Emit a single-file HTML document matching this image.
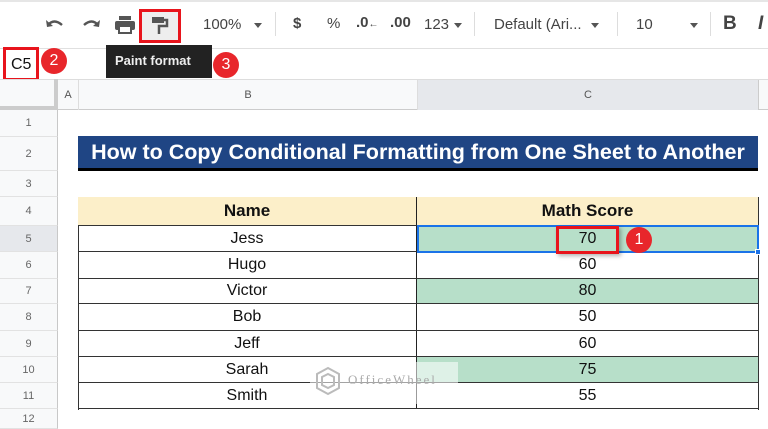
<!DOCTYPE html>
<html><head><meta charset="utf-8"><style>
*{margin:0;padding:0;box-sizing:border-box}
body{width:768px;height:420px;overflow:hidden;background:#fff;font-family:"Liberation Sans",Arial,sans-serif;position:relative}
.a{position:absolute}
.tb{color:#444;font-size:15px}
.sep{position:absolute;top:12px;width:1px;height:24px;background:#ddd}
.rh{position:absolute;left:0;width:58px;text-align:center;font-size:11px;color:#666;background:#f8f9fa;border-bottom:1px solid #e2e2e2;border-right:1px solid #c8c8c8}
.row{position:absolute;left:78px;width:680px;display:flex;border-bottom:1.5px solid #333;font-size:16px;color:#111}
.row div{display:flex;align-items:center;justify-content:center}
.row .b{width:339px;border-right:1.5px solid #222}
.row .c{flex:1}
.g{background:#b7dfc9}
.circ{position:absolute;width:26px;height:26px;border-radius:50%;background:#e8262b;color:#fff;font-size:16px;text-align:center;line-height:26px}
</style></head><body>
<div class="a" style="left:0;top:0;width:768px;height:2px;background:#e6e6e6"></div>
<svg class="a" style="left:44px;top:14px" width="22" height="20" viewBox="0 0 22 20"><path d="M4 11 Q10 4 18 11" stroke="#555" stroke-width="2.4" fill="none"/><path d="M2 6 L3 13 L9 12 Z" fill="#555"/></svg>
<svg class="a" style="left:80px;top:14px" width="22" height="20" viewBox="0 0 22 20"><path d="M4 11 Q12 4 18 11" stroke="#555" stroke-width="2.4" fill="none"/><path d="M20 6 L19 13 L13 12 Z" fill="#555"/></svg>
<svg class="a" style="left:114px;top:15px" width="22" height="20" viewBox="0 0 22 20"><rect x="5" y="1" width="12" height="4" fill="#555"/><rect x="1" y="6" width="20" height="9" rx="2" fill="#555"/><rect x="5" y="11" width="12" height="7" fill="#fff" stroke="#555" stroke-width="2"/></svg>
<div class="a" style="left:139px;top:9px;width:42px;height:34px;border:3px solid #e8141c;background:#eee"></div>
<svg class="a" style="left:150px;top:16px" width="20" height="22" viewBox="0 0 20 22"><rect x="2" y="1" width="12" height="6" fill="#555"/><path d="M14 4 H17 V10 H9 V18" stroke="#555" stroke-width="2.5" fill="none"/></svg>
<div class="a tb" style="left:203px;top:16px">100%</div>
<div class="a" style="left:254px;top:23px;border:4px solid transparent;border-top:5px solid #555"></div>
<div class="sep" style="left:275px"></div>
<div class="a tb" style="left:293px;top:15px;font-weight:bold">$</div>
<div class="a tb" style="left:327px;top:15px">%</div>
<div class="a tb" style="left:356px;top:14px;font-weight:bold">.0<span style="font-size:10px">←</span></div>
<div class="a tb" style="left:390px;top:14px;font-weight:bold">.00</div>
<div class="a tb" style="left:424px;top:16px">123</div>
<div class="a" style="left:454px;top:23px;border:4px solid transparent;border-top:5px solid #555"></div>
<div class="sep" style="left:474px"></div>
<div class="a tb" style="left:494px;top:16px">Default (Ari...</div>
<div class="a" style="left:591px;top:23px;border:4px solid transparent;border-top:5px solid #555"></div>
<div class="sep" style="left:617px"></div>
<div class="a tb" style="left:636px;top:16px">10</div>
<div class="a" style="left:690px;top:23px;border:4px solid transparent;border-top:5px solid #555"></div>
<div class="sep" style="left:710px"></div>
<div class="a" style="left:723px;top:13px;font-size:19px;font-weight:bold;color:#444">B</div>
<div class="a" style="left:758px;top:13px;font-size:19px;font-weight:bold;font-style:italic;color:#444">I</div>
<div class="a" style="left:0;top:48px;width:768px;height:1px;background:#e0e0e0"></div>
<div class="a" style="left:3px;top:47px;width:36px;height:34px;border:3px solid #e8141c;background:#fff;font-size:16px;padding:6px 0 0 5px;color:#111">C5</div>
<div class="circ" style="left:41px;top:48px">2</div>
<div class="a" style="left:106px;top:45px;width:106px;height:33px;background:#222;color:#eee;font-size:13px;font-weight:bold;padding:8px 0 0 9px">Paint format</div>
<div class="a" style="left:156px;top:40px;border:5px solid transparent;border-bottom:5px solid #222"></div>
<div class="circ" style="left:213px;top:52px">3</div>
<div class="a" style="left:0;top:79px;width:768px;height:31px;background:#f8f9fa;border-top:1px solid #ddd;border-bottom:1px solid #ccc"></div>
<div class="a" style="left:0;top:79px;width:58px;height:31px;border-right:4px solid #ccc;border-bottom:4px solid #ccc"></div>
<div class="a" style="left:58px;top:80px;width:21px;height:30px;border-right:1px solid #ddd;font-size:11px;color:#555;text-align:center;line-height:30px">A</div>
<div class="a" style="left:79px;top:80px;width:339px;height:30px;border-right:1px solid #ddd;font-size:11px;color:#555;text-align:center;line-height:30px">B</div>
<div class="a" style="left:418px;top:80px;width:341px;height:30px;background:#e6e8ec;border-right:1px solid #ccc;font-size:11px;color:#555;text-align:center;line-height:30px">C</div>
<div class="rh" style="top:110px;height:27px;line-height:27px">1</div>
<div class="rh" style="top:137px;height:34px;line-height:34px">2</div>
<div class="rh" style="top:171px;height:26px;line-height:26px">3</div>
<div class="rh" style="top:197px;height:29px;line-height:29px">4</div>
<div class="rh" style="top:226px;height:26px;line-height:26px;background:#e6e8ec">5</div>
<div class="rh" style="top:252px;height:27px;line-height:27px">6</div>
<div class="rh" style="top:279px;height:25px;line-height:25px">7</div>
<div class="rh" style="top:304px;height:27px;line-height:27px">8</div>
<div class="rh" style="top:331px;height:26px;line-height:26px">9</div>
<div class="rh" style="top:357px;height:26px;line-height:26px">10</div>
<div class="rh" style="top:383px;height:26px;line-height:26px">11</div>
<div class="rh" style="top:409px;height:20px;line-height:20px">12</div>
<div class="a" style="left:78px;top:136px;width:680px;height:35px;background:#1f4584;border-bottom:3px solid #000;color:#fff;font-weight:bold;font-size:21.5px;text-align:center;line-height:32px;white-space:nowrap">How to Copy Conditional Formatting from One Sheet to Another</div>
<div class="a" style="left:78px;top:197px;width:681px;height:213px;border:1.5px solid #333;border-bottom:none"></div>
<div class="row" style="top:197px;height:29px;background:#fcefc9;font-weight:bold;font-size:17px"><div class="b">Name</div><div class="c">Math Score</div></div>
<div class="row" style="top:226px;height:26px"><div class="b">Jess</div><div class="c g">70</div></div>
<div class="row" style="top:252px;height:27px"><div class="b">Hugo</div><div class="c">60</div></div>
<div class="row" style="top:279px;height:25px"><div class="b">Victor</div><div class="c g">80</div></div>
<div class="row" style="top:304px;height:27px"><div class="b">Bob</div><div class="c">50</div></div>
<div class="row" style="top:331px;height:26px"><div class="b">Jeff</div><div class="c">60</div></div>
<div class="row" style="top:357px;height:26px"><div class="b">Sarah</div><div class="c g">75</div></div>
<div class="row" style="top:383px;height:26px"><div class="b">Smith</div><div class="c">55</div></div>
<div class="a" style="left:417px;top:225px;width:342px;height:28px;border:2px solid #1a73e8"></div>
<div class="a" style="left:755px;top:249px;width:6px;height:6px;background:#1a73e8;border:1px solid #fff"></div>
<div class="a" style="left:556px;top:226px;width:63px;height:28px;border:3px solid #e8141c;box-shadow:2px 2px 4px rgba(0,0,0,.3)"></div>
<div class="circ" style="left:626px;top:227px">1</div>
<div class="a" style="left:310px;top:362px;width:148px;height:42px;background:rgba(255,255,255,.55)"></div>
<div class="a" style="left:348px;top:372px;font-family:'Liberation Serif',serif;font-size:13px;letter-spacing:2px;color:#aaa">OfficeWheel</div>
<svg class="a" style="left:314px;top:366px" width="28" height="30" viewBox="0 0 28 30"><path d="M14 2 L25 8 V22 L14 28 L3 22 V8 Z" fill="none" stroke="#bbb" stroke-width="2"/><path d="M14 8 L20 11 V19 L14 22 L8 19 V11 Z" fill="none" stroke="#bbb" stroke-width="2"/></svg>
</body></html>
